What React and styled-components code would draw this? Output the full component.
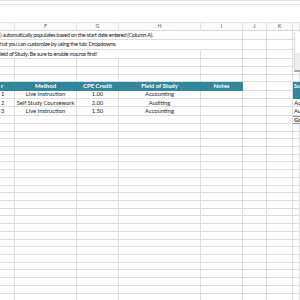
import React from 'react'
import styled, { createGlobalStyle } from 'styled-components'

const TEAL = '#31869b'
const GRID = '#dcdcdc'

// column widths for E..L as they sit in the window
const COLS = '15px 62px 42px 82px 42px 24px 26px 7px'

const GlobalStyle = createGlobalStyle`
  html, body {
    margin: 0;
    padding: 0;
    background: #fff;
  }
  body {
    font-family: Lato, "Liberation Sans", Arial, sans-serif;
    color: #1a1a1a;
  }
`

const Sheet = styled.div`
  width: 300px;
  height: 300px;
  overflow: hidden;
  position: relative;
  background: #fff;
`

const FormulaArea = styled.div`
  height: 22px;
  box-sizing: border-box;
  border-top: 1px solid #e6e6e6;
  display: flex;
  flex-direction: column;
  &::after {
    content: '';
    display: block;
    margin-top: 3px;
    border-top: 1px solid #e6e6e6;
  }
`

const Row = styled.div`
  display: grid;
  grid-template-columns: ${COLS};
  height: ${p => p.h}px;
`

const HeaderRow = styled(Row)`
  background: #fbfbfb;
  border-top: 1px solid #e2e2e2;
  box-sizing: border-box;
`

const ColLetter = styled.div`
  font-size: 5.4px;
  color: #555;
  display: flex;
  align-items: center;
  justify-content: center;
  border-right: 1px solid #e2e2e2;
  border-bottom: 1px solid #d4d4d4;
  box-sizing: border-box;
`

const Cell = styled.div`
  grid-column: span ${p => p.span || 1};
  box-sizing: border-box;
  border-right: 1px solid ${p => (p.flow ? 'transparent' : GRID)};
  border-bottom: 1px solid ${GRID};
  font-size: 5.8px;
  line-height: 1;
  white-space: nowrap;
  overflow: visible;
  display: flex;
  align-items: center;
  justify-content: ${p => p.align || 'flex-start'};
  padding: 0 ${p => (p.align === 'center' ? 0 : 1)}px;
`

// instruction lines spill over several empty cells
const NoteCell = styled(Cell)`
  letter-spacing: -0.32px;
  padding-left: 0;
`

const Head = styled(Cell)`
  background: ${TEAL};
  color: #fff;
  font-weight: bold;
  font-size: 6px;
  border-right-color: ${TEAL};
  border-bottom-color: ${TEAL};
`

const PivotHead = styled(Cell)`
  grid-row: span 2;
  background: ${TEAL};
  color: #fff;
  font-weight: bold;
  align-items: flex-start;
  padding-top: 2px;
  font-size: 5px;
  border-right: none;
  border-bottom-color: ${TEAL};
`

const PivotCell = styled(Cell)`
  border-right: none;
  font-weight: ${p => (p.total ? 'bold' : 'normal')};
  border-top: ${p => (p.total ? `1px solid #6a9fae` : 'none')};
  border-bottom-color: ${p => (p.total ? '#6a9fae' : GRID)};
  overflow: hidden;
`

const Block = styled.div`
  display: grid;
  grid-template-columns: ${COLS};
  grid-auto-rows: ${p => p.h}px;
`

const ButtonEdge = styled.div`
  position: absolute;
  left: 294px;
  top: 32px;
  width: 10px;
  height: 40px;
  box-sizing: border-box;
  border-left: 1px solid #d6d6d6;
  background: linear-gradient(#fff 0 55%, #eeeeee 55% 100%);
  border-bottom: 2px solid #a9a9a9;
`

const notes = [
  { text: ') automatically populates based on the start date entered (Column A).', span: 4 },
  { text: 'hat you can customize by using the tab: Dropdowns.', span: 4 },
  { text: 'ield of Study. Be sure to enable macros first!', span: 3 }
]

const entries = [
  { n: '1', method: 'Live Instruction', credit: '1.00', field: 'Accounting' },
  { n: '2', method: 'Self Study Coursework', credit: '2.00', field: 'Auditing' },
  { n: '3', method: 'Live Instruction', credit: '1.50', field: 'Accounting' }
]

const pivot = [null, 'Ac', 'Au']

const Blank = ({ count }) =>
  Array.from({ length: count }, (_, i) => <Cell key={i} />)

export default function App() {
  return (
    <Sheet>
      <GlobalStyle />
      <FormulaArea />
      <HeaderRow h={8.5}>
        {['', 'F', 'G', 'H', 'I', 'J', 'K', ''].map((l, i) => (
          <ColLetter key={i}>{l}</ColLetter>
        ))}
      </HeaderRow>

      {notes.map((row, i) => (
        <Row key={i} h={9.6}>
          <NoteCell span={row.span} flow>{row.text}</NoteCell>
          <Blank count={8 - row.span} />
        </Row>
      ))}

      {[0, 1, 2].map(i => (
        <Row key={i} h={7.7}>
          <Blank count={8} />
        </Row>
      ))}

      <Block h={8.3}>
        <Head align="flex-start">r</Head>
        <Head align="center">Method</Head>
        <Head align="center">CPE Credit</Head>
        <Head align="center">Field of Study</Head>
        <Head align="center">Notes</Head>
        <Cell />
        <Cell />
        <PivotHead>Su</PivotHead>

        {entries.map((e, i) => (
          <React.Fragment key={e.n}>
            <Cell align="flex-start">{e.n}</Cell>
            <Cell align="center">{e.method}</Cell>
            <Cell align="center">{e.credit}</Cell>
            <Cell align="center">{e.field}</Cell>
            <Cell />
            <Cell />
            <Cell />
            {i > 0 && <PivotCell>{pivot[i]}</PivotCell>}
          </React.Fragment>
        ))}

        <Blank count={7} />
        <PivotCell total>Gr</PivotCell>
      </Block>

      <Block h={7.72}>
        <Blank count={8 * 24} />
      </Block>

      <ButtonEdge />
    </Sheet>
  )
}
